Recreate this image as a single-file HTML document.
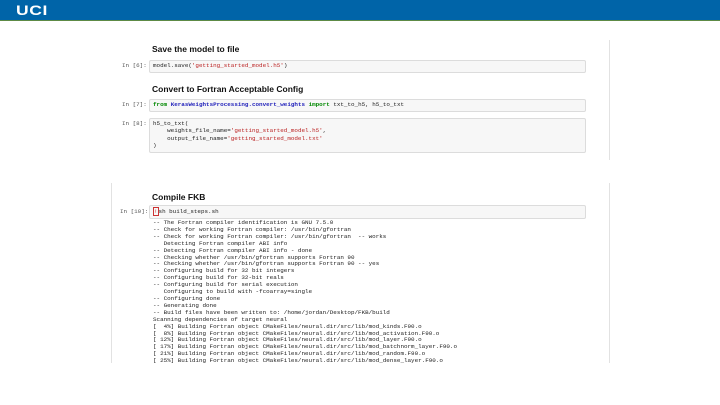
<!DOCTYPE html>
<html><head><meta charset="utf-8"><style>
body{margin:0;width:720px;height:405px;background:#fff;position:relative;overflow:hidden;font-family:"Liberation Sans",sans-serif}
.hdr{position:absolute;left:0;top:0;width:720px;height:20px;background:#0064a8;border-bottom:1px solid #5d8a45}
.logo{position:absolute;left:16px;top:2px;color:#fff;font-weight:bold;font-size:14px;letter-spacing:0.5px;transform:scaleX(1.25);transform-origin:left}
.a{position:absolute}
.h{font-weight:bold;font-size:8.5px;color:#111;left:152px}
.p{font-family:"Liberation Mono",monospace;font-size:5.9px;color:#555;white-space:pre}
.box{background:#f7f7f7;border:1px solid #dcdcdc;border-radius:2px;left:149px;width:437px;box-sizing:border-box}
.c{font-family:"Liberation Mono",monospace;font-size:5.9px;color:#222;white-space:pre;line-height:7.3px}
.o{line-height:6.9px}
.s{color:#b22}.k{color:#080;font-weight:bold}.n{color:#22b;font-weight:bold}
.vl{position:absolute;width:1px;background:#e2e2e2}
</style></head><body>
<div class="hdr"><div class="logo">UCI</div></div>
<div class="vl" style="left:609px;top:40px;height:120px"></div>
<div class="vl" style="left:111px;top:183px;height:180px"></div>
<div class="vl" style="left:609px;top:183px;height:180px"></div>

<div class="a h" style="top:44px">Save the model to file</div>
<div class="a p" style="left:122px;top:62px">In [6]:</div>
<div class="a box" style="top:60px;height:13px"><div class="c" style="padding:1px 3px">model.save(<span class="s">'getting_started_model.h5'</span>)</div></div>

<div class="a h" style="top:84px">Convert to Fortran Acceptable Config</div>
<div class="a p" style="left:122px;top:101px">In [7]:</div>
<div class="a box" style="top:99px;height:13px"><div class="c" style="padding:1px 3px"><span class="k">from</span> <span class="n">KerasWeightsProcessing.convert_weights</span> <span class="k">import</span> txt_to_h5, h5_to_txt</div></div>

<div class="a p" style="left:122px;top:120px">In [8]:</div>
<div class="a box" style="top:118px;height:35px"><div class="c" style="padding:1px 3px">h5_to_txt(
    weights_file_name=<span class="s">'getting_started_model.h5'</span>,
    output_file_name=<span class="s">'getting_started_model.txt'</span>
)</div></div>

<div class="a h" style="top:192px">Compile FKB</div>
<div class="a p" style="left:120px;top:208px">In [10]:</div>
<div class="a box" style="top:205px;height:14px;background:#f7f7f7"><div class="c" style="padding:2px 3px"><span style="border:1px solid #c33;color:#c33">!</span>sh build_steps.sh</div></div>
<div class="a c o" style="left:153px;top:220px">-- The Fortran compiler identification is GNU 7.5.0
-- Check for working Fortran compiler: /usr/bin/gfortran
-- Check for working Fortran compiler: /usr/bin/gfortran  -- works
   Detecting Fortran compiler ABI info
-- Detecting Fortran compiler ABI info - done
-- Checking whether /usr/bin/gfortran supports Fortran 90
-- Checking whether /usr/bin/gfortran supports Fortran 90 -- yes
-- Configuring build for 32 bit integers
-- Configuring build for 32-bit reals
-- Configuring build for serial execution
   Configuring to build with -fcoarray=single
-- Configuring done
-- Generating done
-- Build files have been written to: /home/jordan/Desktop/FKB/build
Scanning dependencies of target neural
[  4%] Building Fortran object CMakeFiles/neural.dir/src/lib/mod_kinds.F90.o
[  8%] Building Fortran object CMakeFiles/neural.dir/src/lib/mod_activation.F90.o
[ 12%] Building Fortran object CMakeFiles/neural.dir/src/lib/mod_layer.F90.o
[ 17%] Building Fortran object CMakeFiles/neural.dir/src/lib/mod_batchnorm_layer.F90.o
[ 21%] Building Fortran object CMakeFiles/neural.dir/src/lib/mod_random.F90.o
[ 25%] Building Fortran object CMakeFiles/neural.dir/src/lib/mod_dense_layer.F90.o</div>
</body></html>
